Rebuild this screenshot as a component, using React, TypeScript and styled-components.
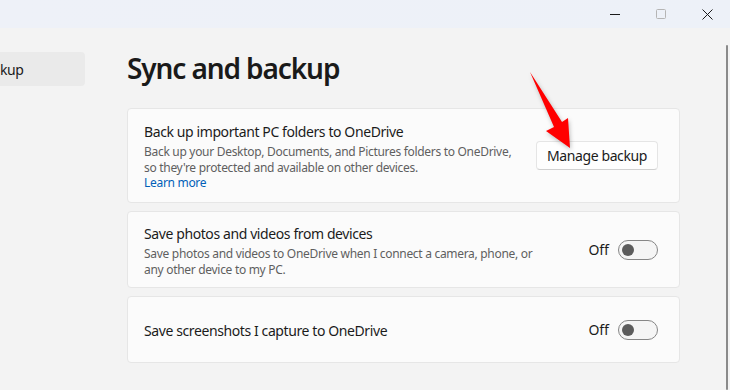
import React from "react";
import styled, { createGlobalStyle } from "styled-components";

const Global = createGlobalStyle`
  html, body { margin: 0; padding: 0; }
  body {
    width: 730px;
    height: 390px;
    overflow: hidden;
    background: #f3f3f3;
    font-family: "Noto Sans", "Open Sans", sans-serif;
    color: #1b1b1b;
  }
`;

const Window = styled.div`
  position: relative;
  width: 730px;
  height: 390px;
  display: flex;
  flex-direction: column;
  background: #f3f3f3;
  overflow: hidden;
`;

const TitleBar = styled.div`
  height: 28px;
  flex: none;
  display: flex;
  justify-content: flex-end;
  align-items: center;
  background: linear-gradient(90deg, #eef1f8 0%, #edf1f8 100%);
`;

const CaptionButton = styled.div`
  width: 46px;
  height: 28px;
  display: flex;
  align-items: center;
  justify-content: center;
`;

const Body = styled.div`
  flex: 1;
  display: flex;
  min-height: 0;
`;

const Nav = styled.nav`
  width: 85px;
  flex: none;
  padding-top: 24px;
`;

const NavItem = styled.div`
  width: 85px;
  height: 34px;
  box-sizing: border-box;
  border-radius: 0 4px 4px 0;
  background: #eaeaea;
  display: flex;
  align-items: center;
  padding-left: 0;
  font-size: 14px;
  letter-spacing: -0.4px;
  color: #1b1b1b;
  white-space: nowrap;
`;

const Content = styled.main`
  width: 553px;
  flex: none;
  margin-left: 42px;
  display: flex;
  flex-direction: column;
`;

const PageTitle = styled.h1`
  margin: 20px 0 0 0;
  height: 40px;
  line-height: 40px;
  font-size: 28px;
  font-weight: 600;
  color: #1a1a1a;
  letter-spacing: -1.1px;
`;

const Cards = styled.div`
  margin-top: 20px;
  display: flex;
  flex-direction: column;
  gap: 8px;
`;

const Card = styled.section<{ $h: number }>`
  box-sizing: border-box;
  height: ${(p) => p.$h}px;
  background: #fbfbfb;
  border: 1px solid #e6e6e6;
  border-radius: 4px;
  display: flex;
  align-items: center;
  padding: 0 21px 0 16px;
  gap: 16px;
`;

const Text = styled.div`
  flex: 1;
  display: flex;
  flex-direction: column;
  white-space: nowrap;
  padding-top: 2px;
`;

const CardTitle = styled.div`
  font-size: 14px;
  line-height: 20px;
  letter-spacing: -0.4px;
  color: #1b1b1b;
`;

const Desc = styled.div`
  margin-top: 2px;
  font-size: 12px;
  line-height: 15.5px;
  letter-spacing: -0.3px;
  color: #5f5f5f;
`;

const Link = styled.a`
  font-size: 12px;
  line-height: 15.5px;
  letter-spacing: -0.3px;
  color: #005fb8;
  text-decoration: none;
`;

const Button = styled.button`
  box-sizing: border-box;
  width: 122px;
  height: 29px;
  flex: none;
  border: 1px solid #e5e5e5;
  border-bottom-color: #d0d0d0;
  border-radius: 4px;
  background: #fefefe;
  font-family: inherit;
  font-size: 14px;
  letter-spacing: -0.4px;
  color: #1b1b1b;
  padding: 0;
`;

const ToggleWrap = styled.div`
  display: flex;
  align-items: center;
  gap: 9px;
  flex: none;
  font-size: 14px;
  color: #1b1b1b;
`;

const Switch = styled.div`
  box-sizing: border-box;
  width: 40px;
  height: 20px;
  border-radius: 10px;
  border: 1px solid #868686;
  background: #f5f5f5;
  display: flex;
  align-items: center;
  padding-left: 3px;
`;

const Knob = styled.div`
  width: 12px;
  height: 12px;
  border-radius: 50%;
  background: #5c5c5c;
`;

const ScrollCol = styled.div`
  flex: none;
  margin-left: 46px;
  padding-top: 17px;
  display: flex;
`;

const ScrollThumb = styled.div`
  width: 2px;
  background: #8a8a8a;
  border-radius: 1px;
`;

const Arrow = styled.svg`
  position: absolute;
  left: 0;
  top: 0;
  pointer-events: none;
  filter: drop-shadow(1px 2px 2px rgba(0, 0, 0, 0.25));
`;

const Toggle = () => (
  <ToggleWrap>
    <span>Off</span>
    <Switch>
      <Knob />
    </Switch>
  </ToggleWrap>
);

export default function App() {
  return (
    <>
      <Global />
      <Window>
        <TitleBar>
          <CaptionButton>
            <svg width="10" height="10" viewBox="0 0 10 10">
              <path d="M0 5.5H10" stroke="#1b1b1b" strokeWidth="1" />
            </svg>
          </CaptionButton>
          <CaptionButton>
            <svg width="10" height="10" viewBox="0 0 10 10">
              <rect x="0.5" y="0.5" width="9" height="9" rx="1" fill="none" stroke="#b5b5b5" strokeWidth="1" />
            </svg>
          </CaptionButton>
          <CaptionButton>
            <svg width="11" height="11" viewBox="0 0 11 11">
              <path d="M0.5 0.5L10.5 10.5M10.5 0.5L0.5 10.5" stroke="#1b1b1b" strokeWidth="1" />
            </svg>
          </CaptionButton>
        </TitleBar>
        <Body>
          <Nav>
            <NavItem>kup</NavItem>
          </Nav>
          <Content>
            <PageTitle>Sync and backup</PageTitle>
            <Cards>
              <Card $h={95}>
                <Text>
                  <CardTitle>Back up important PC folders to OneDrive</CardTitle>
                  <Desc>
                    Back up your Desktop, Documents, and Pictures folders to OneDrive,
                    <br />
                    so they're protected and available on other devices.
                  </Desc>
                  <Link href="#">Learn more</Link>
                </Text>
                <Button>Manage backup</Button>
              </Card>
              <Card $h={77}>
                <Text>
                  <CardTitle>Save photos and videos from devices</CardTitle>
                  <Desc>
                    Save photos and videos to OneDrive when I connect a camera, phone, or
                    <br />
                    any other device to my PC.
                  </Desc>
                </Text>
                <Toggle />
              </Card>
              <Card $h={67}>
                <Text>
                  <CardTitle>Save screenshots I capture to OneDrive</CardTitle>
                </Text>
                <Toggle />
              </Card>
            </Cards>
          </Content>
          <ScrollCol>
            <ScrollThumb />
          </ScrollCol>
        </Body>
        <Arrow width="730" height="390" viewBox="0 0 730 390">
          <polygon
            points="530,72 562,122 568,118 570,148 546,131 554,127"
            fill="#ff0000"
          />
        </Arrow>
      </Window>
    </>
  );
}
